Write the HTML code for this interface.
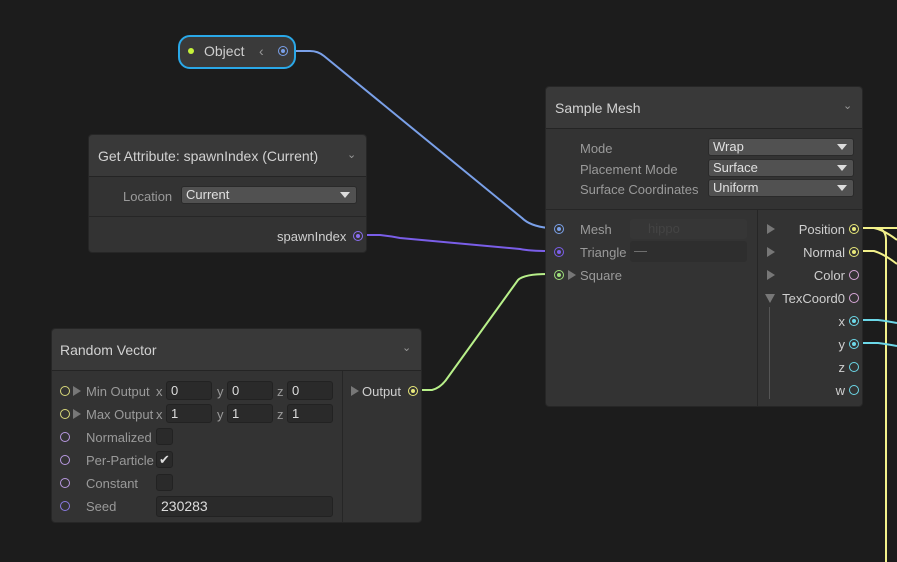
<!DOCTYPE html><html><head><meta charset="utf-8"><style>
*{box-sizing:border-box;margin:0;padding:0}
body{width:897px;height:562px;background:#1c1c1c;font-family:"Liberation Sans",sans-serif;font-size:13px;color:#c4c4c4;position:relative;overflow:hidden}
.a{position:absolute}
.node{position:absolute;background:#333;border-radius:4px;border:1px solid #262626}
.hdr{position:absolute;left:0;right:0;top:0;background:#393939;border-bottom:1px solid #242424;border-radius:4px 4px 0 0;font-size:14px;color:#d2d2d2}
.lbl{color:#9a9a9a}
.dd{position:absolute;background:#515151;border:1px solid #2a2a2a;border-radius:3px;color:#e0e0e0;padding-left:4px;height:18px;line-height:16px}
.dd:after{content:"";position:absolute;right:6px;top:5px;border-left:5px solid transparent;border-right:5px solid transparent;border-top:6px solid #ddd}
.fld{position:absolute;background:#2a2a2a;border:1px solid #222;border-radius:3px;color:#ddd;padding-left:4px;height:19px;line-height:17px}
.p{position:absolute;width:10px;height:10px;border-radius:50%;border:1.5px solid}
.p.f:after{content:"";position:absolute;left:1.5px;top:1.5px;width:4px;height:4px;border-radius:50%;background:currentColor}
.tri{position:absolute;border-top:5px solid transparent;border-bottom:5px solid transparent;border-left:8px solid #777}
.chev{position:absolute;color:#999;font-size:11px}
</style></head><body>
<svg class="a" style="left:0;top:0" width="897" height="562">
<g fill="none" stroke-width="2">
<path d="M296 51 L310 51 Q318 51 324 56 L522 218 Q530 226 548 228" stroke="#7aa0e8"/>
<path d="M366 235 L380 235 Q390 236 400 238 L520 249 Q530 251 548 251" stroke="#7a5ee8"/>
<path d="M421 390 L432 390 Q440 388 446 380 L518 280 Q524 274 548 274" stroke="#b8f08a"/>
<path d="M862 228 L874 228 Q884 230 897 240 M862 251 L874 251 Q884 254 897 264 M862 228 L878 228 Q886 230 886 240 L886 562 M878 228 L897 228" stroke="#f2f08a"/>
<path d="M862 320 L878 320 Q886 321 897 323 M862 343 L878 343 Q886 344 897 346" stroke="#6cd8e8"/>
</g></svg>

<div class="a" style="left:178px;top:35px;width:118px;height:34px;border:2px solid #2aa8e8;border-radius:12px;background:#3a3a3a"></div>
<div class="a" style="left:188px;top:48px;width:6px;height:6px;border-radius:50%;background:#c6f23a"></div>
<div class="a" style="left:204px;top:43px;font-size:14px;color:#cfcfcf">Object</div>
<div class="a" style="left:259px;top:43px;font-size:14px;color:#999">‹</div>
<div class="p f" style="left:278px;top:46px;color:#7aa0e8"></div>

<div class="node" style="left:88px;top:134px;width:279px;height:119px">
<div class="hdr" style="height:42px;padding:13px 0 0 9px">Get Attribute: spawnIndex (Current)</div>
<div class="chev" style="left:258px;top:13px">⌄</div>
<div class="a" style="left:0;right:0;top:81px;border-top:1px solid #262626"></div>
<div class="a lbl" style="left:34px;top:54px">Location</div>
<div class="dd" style="left:92px;top:51px;width:176px">Current</div>
<div class="a" style="left:188px;top:94px;color:#cfcfcf">spawnIndex</div>
<div class="p f" style="left:264px;top:96px;color:#8a6ef0"></div>
</div>

<div class="node" style="left:545px;top:86px;width:318px;height:321px">
<div class="hdr" style="height:42px;padding:13px 0 0 9px">Sample Mesh</div>
<div class="chev" style="left:297px;top:12px">⌄</div>
<div class="a" style="left:0;right:0;top:122px;border-top:1px solid #262626"></div>
<div class="a" style="left:211px;top:122px;bottom:0;border-left:1px solid #262626"></div>
<div class="a lbl" style="left:34px;top:54px">Mode</div>
<div class="a lbl" style="left:34px;top:75px">Placement Mode</div>
<div class="a lbl" style="left:34px;top:95px">Surface Coordinates</div>
<div class="dd" style="left:162px;top:51px;width:146px">Wrap</div>
<div class="dd" style="left:162px;top:72px;width:146px">Surface</div>
<div class="dd" style="left:162px;top:92px;width:146px">Uniform</div>
<div class="p f" style="left:8px;top:137px;color:#7aa0e8"></div>
<div class="p f" style="left:8px;top:160px;color:#7a5ee8"></div>
<div class="p f" style="left:8px;top:183px;color:#9ee07a"></div>
<div class="a lbl" style="left:34px;top:135px">Mesh</div>
<div class="a lbl" style="left:34px;top:158px">Triangle</div>
<div class="a lbl" style="left:34px;top:181px">Square</div>
<div class="tri" style="left:22px;top:183px"></div>
<div class="a" style="left:84px;top:132px;width:117px;height:20px;background:#363636;border-radius:3px;color:#444;padding-left:18px;line-height:20px">hippo</div>
<div class="a" style="left:84px;top:154px;width:117px;height:21px;background:#2e2e2e;border-radius:3px;color:#777;padding-left:4px;line-height:20px">—</div>
<div class="tri" style="left:221px;top:137px"></div>
<div class="tri" style="left:221px;top:160px"></div>
<div class="tri" style="left:221px;top:183px"></div>
<div class="a" style="left:219px;top:207px;border-left:5px solid transparent;border-right:5px solid transparent;border-top:9px solid #777"></div>
<div class="a" style="left:223px;top:220px;height:92px;border-left:1px solid #555"></div>
<div class="a" style="right:17px;top:135px;color:#cfcfcf;text-align:right">Position</div>
<div class="a" style="right:17px;top:158px;color:#cfcfcf">Normal</div>
<div class="a" style="right:17px;top:181px;color:#cfcfcf">Color</div>
<div class="a" style="right:17px;top:204px;color:#cfcfcf">TexCoord0</div>
<div class="a" style="right:17px;top:227px;color:#cfcfcf">x</div>
<div class="a" style="right:17px;top:250px;color:#cfcfcf">y</div>
<div class="a" style="right:17px;top:273px;color:#cfcfcf">z</div>
<div class="a" style="right:17px;top:296px;color:#cfcfcf">w</div>
<div class="p f" style="left:303px;top:137px;color:#e8e87a"></div>
<div class="p f" style="left:303px;top:160px;color:#e8e87a"></div>
<div class="p" style="left:303px;top:183px;color:#d8a8d8"></div>
<div class="p" style="left:303px;top:206px;color:#d8a8d8"></div>
<div class="p f" style="left:303px;top:229px;color:#6cd8e8"></div>
<div class="p f" style="left:303px;top:252px;color:#6cd8e8"></div>
<div class="p" style="left:303px;top:275px;color:#6cd8e8"></div>
<div class="p" style="left:303px;top:298px;color:#6cd8e8"></div>
</div>

<div class="node" style="left:51px;top:328px;width:371px;height:195px">
<div class="hdr" style="height:42px;padding:13px 0 0 8px">Random Vector</div>
<div class="chev" style="left:350px;top:12px">⌄</div>
<div class="a" style="left:290px;top:42px;bottom:0;border-left:1px solid #262626"></div>
<div class="p" style="left:8px;top:57px;color:#d8d87a"></div>
<div class="p" style="left:8px;top:80px;color:#d8d87a"></div>
<div class="p" style="left:8px;top:103px;color:#b898e0"></div>
<div class="p" style="left:8px;top:126px;color:#b898e0"></div>
<div class="p" style="left:8px;top:149px;color:#b898e0"></div>
<div class="p" style="left:8px;top:172px;color:#8a7ae0"></div>
<div class="tri" style="left:21px;top:57px"></div>
<div class="tri" style="left:21px;top:80px"></div>
<div class="a lbl" style="left:34px;top:55px">Min Output</div>
<div class="a lbl" style="left:34px;top:78px">Max Output</div>
<div class="a lbl" style="left:34px;top:101px">Normalized</div>
<div class="a lbl" style="left:34px;top:124px">Per-Particle</div>
<div class="a lbl" style="left:34px;top:147px">Constant</div>
<div class="a lbl" style="left:34px;top:170px">Seed</div>
<div class="a lbl" style="left:104px;top:55px">x</div><div class="a lbl" style="left:165px;top:55px">y</div><div class="a lbl" style="left:225px;top:55px">z</div>
<div class="a lbl" style="left:104px;top:78px">x</div><div class="a lbl" style="left:165px;top:78px">y</div><div class="a lbl" style="left:225px;top:78px">z</div>
<div class="fld" style="left:114px;top:52px;width:46px">0</div><div class="fld" style="left:175px;top:52px;width:46px">0</div><div class="fld" style="left:235px;top:52px;width:46px">0</div>
<div class="fld" style="left:114px;top:75px;width:46px">1</div><div class="fld" style="left:175px;top:75px;width:46px">1</div><div class="fld" style="left:235px;top:75px;width:46px">1</div>
<div class="fld" style="left:104px;top:99px;width:17px;height:17px"></div>
<div class="fld" style="left:104px;top:122px;width:17px;height:17px;padding-left:2px;line-height:15px;font-size:13px">✔</div>
<div class="fld" style="left:104px;top:145px;width:17px;height:17px"></div>
<div class="fld" style="left:104px;top:167px;width:177px;height:21px;line-height:19px;font-size:14px">230283</div>
<div class="tri" style="left:299px;top:57px"></div>
<div class="a" style="left:310px;top:55px;color:#cfcfcf">Output</div>
<div class="p f" style="left:356px;top:57px;color:#e8e87a"></div>
</div>
</body></html>
